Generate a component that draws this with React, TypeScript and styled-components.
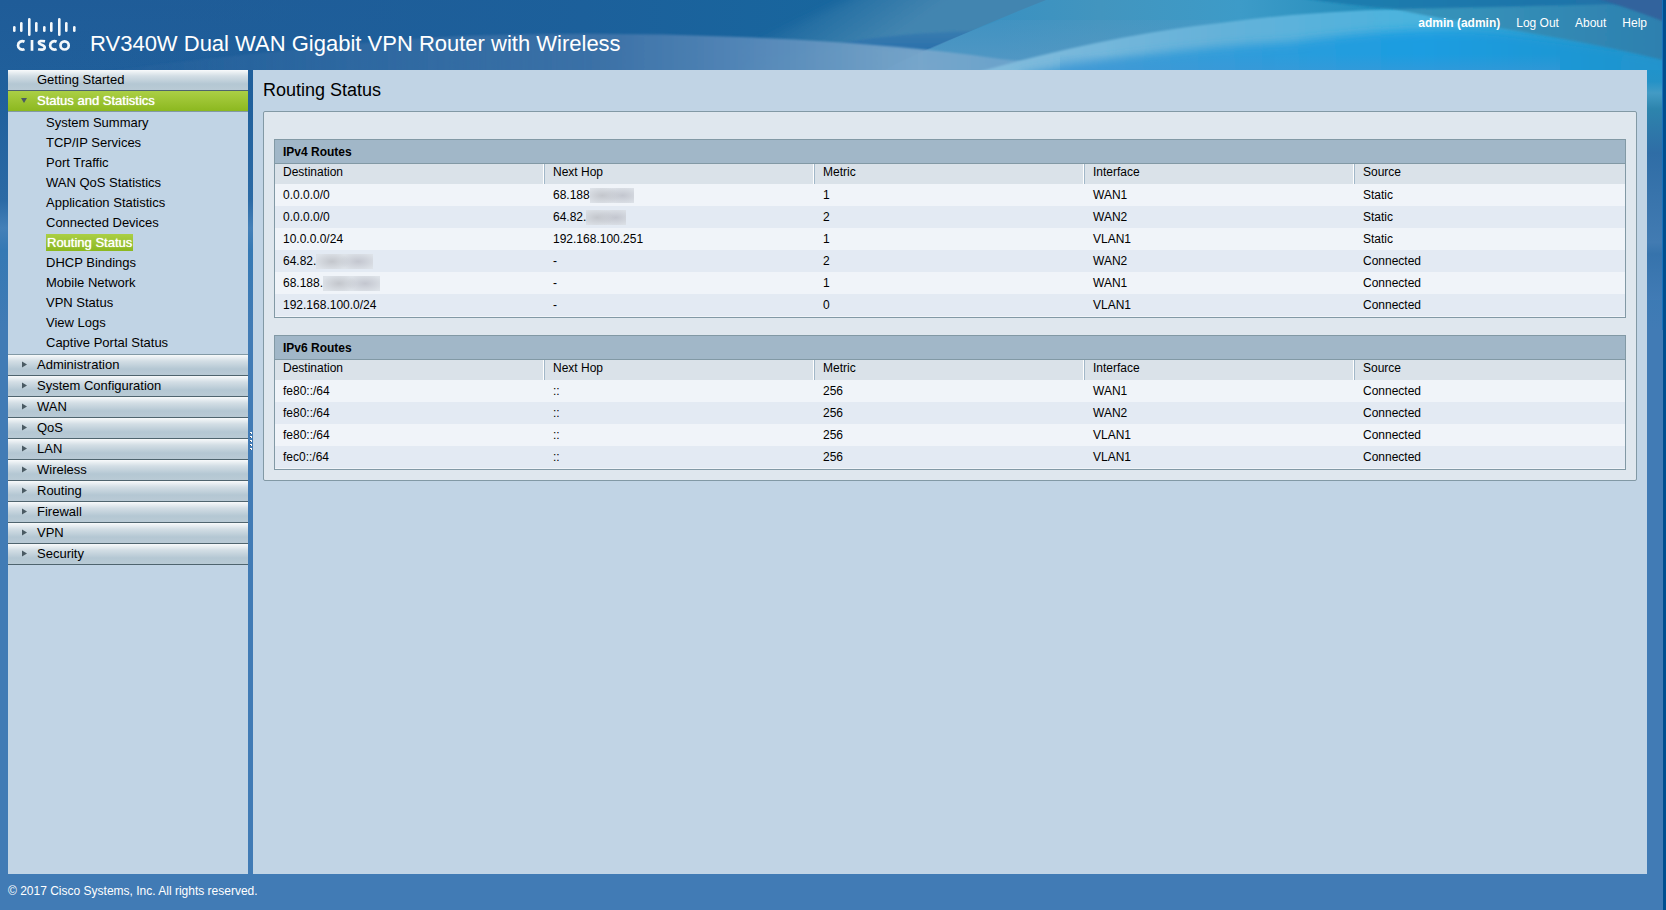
import React from "react";
import styled, { createGlobalStyle, css } from "styled-components";

const GlobalStyle = createGlobalStyle`
  * { box-sizing: border-box; }
  body {
    margin: 0;
    background: #417bb5;
    color: #000;
    font: 12px/16px "Liberation Sans", Arial, sans-serif;
  }
  ul { list-style: none; margin: 0; padding: 0; }
  a { color: inherit; text-decoration: none; }
  h1, h2 { margin: 0; font-weight: 400; }
`;

const Page = styled.div`
  position: relative;
  z-index: 0;
  display: flex;
  flex-direction: column;
  min-height: 100vh;
  padding: 0 19px 0 8px;
`;

const Backdrop = styled.div`
  position: absolute;
  inset: 0;
  z-index: -1;
  overflow: hidden;
  background: linear-gradient(#1f5c98 0, #20609c 100px, #2b6aa5 200px, #4480b8 228px, #3579b4 250px, #417bb5 330px);
  border-right: 3px solid #004f90;

  svg { position: absolute; top: 0; right: 0; }
`;

const Header = styled.header`
  display: flex;
  justify-content: space-between;
  align-items: flex-start;
  height: 70px;
  color: #fff;
`;

const Brand = styled.div`
  display: flex;
  gap: 13px;
  padding: 18px 0 0 4px;
`;

const ProductName = styled.h1`
  padding-top: 13px;
  font-size: 22px;
  line-height: 26px;
`;

const AccountLinks = styled.nav`
  display: flex;
  gap: 16px;
  padding-top: 15px;
`;

const Body = styled.div`
  display: flex;
  flex: 1;
`;

const Sidebar = styled.nav`
  width: 240px;
  background: #c1d4e5;
`;

const NavLink = styled.a<{ $open?: boolean }>`
  display: flex;
  align-items: center;
  height: 21px;
  border-bottom: 1px solid #4f646e;
  background: linear-gradient(#f8fafb 0, #d3dee5 30%, #b4c7d3 70%, #b9cad5 100%);
  font-size: 13px;
  line-height: 16px;

  ${(p) => p.$open && css`
    color: #fff;
    background: linear-gradient(#abcf45, #8cb81f);
    border-color: #8299a5;
    text-shadow: 0 0 1px #fff;
  `}
`;

const ArrowSlot = styled.span`
  display: flex;
  justify-content: center;
  width: 29px;
  padding: 0 0 1px 3px;

  svg { display: block; }
`;

const SubMenu = styled.ul`
  padding-bottom: 2px;
  border-bottom: 1px solid #8299a5;
`;

const SubItem = styled.li`
  display: flex;
  align-items: center;
  height: 20px;
  padding-left: 38px;
  font-size: 13px;
`;

const SubLink = styled.a<{ $current?: boolean }>`
  line-height: 17px;
  ${(p) => p.$current && css`
    padding: 0 1px;
    color: #fff;
    background: linear-gradient(#abcf45, #8cb81f);
    text-shadow: 0 0 1px #fff;
  `}
`;

const Splitter = styled.div`
  display: flex;
  flex-direction: column;
  justify-content: center;
  width: 5px;
  padding-bottom: 60px;
  svg { display: block; }
`;

const Main = styled.main`
  flex: 1;
  padding: 10px;
  background: #c1d4e5;
`;

const PageTitle = styled.h2`
  height: 31px;
  font-size: 18px;
  line-height: 20px;
`;

const Panel = styled.section`
  display: grid;
  gap: 17px;
  padding: 27px 10px 10px;
  border: 1px solid #8299a5;
  border-radius: 2px;
  background: #dfe7ee;
`;

const TableFrame = styled.div`
  padding-bottom: 1px;
  border: 1px solid #8299a5;
  background: #f0f4f9;
`;

const Table = styled.table`
  width: 100%;
  table-layout: fixed;
  border-collapse: separate;
  border-spacing: 0;

  caption {
    height: 24px;
    padding: 0 8px;
    border-bottom: 1px solid #8299a5;
    background: #a1b7c8;
    font-weight: 700;
    line-height: 24px;
    text-align: left;
  }
  th {
    height: 20px;
    padding: 0 8px 4px;
    background: #dae2e9;
    font-weight: 400;
    text-align: left;
  }
  th:not(:last-child) {
    border-right: 1px solid #a1b7c8;
    box-shadow: inset -1px 0 #fff;
  }
  td { height: 22px; padding: 0 8px; }
  tbody tr:nth-child(even) { background: #e3eaf3; }
`;

const Redacted = styled.span<{ $size: number }>`
  display: inline-block;
  width: ${(p) => p.$size}px;
  height: 15px;
  vertical-align: middle;
  background:
    radial-gradient(ellipse 18px 9px at 28% 50%, #c3c6cc, transparent),
    radial-gradient(ellipse 20px 9px at 74% 50%, #c3c6cf, transparent),
    #dde2e8;
`;

const Footer = styled.footer`
  height: 36px;
  padding-top: 9px;
  color: #fff;
`;

const logoBars = [
  [0, 8, 6], [7, 4, 10], [15, 0, 18], [22, 4, 10], [30, 8, 6], [37, 4, 10], [45, 0, 18], [52, 4, 10], [60, 8, 6],
];

const CiscoLogo = () => (
  <svg width="65" height="36" viewBox="0 0 65 36" role="img" aria-label="Cisco">
    {logoBars.map(([x, y, h]) => (
      <rect key={x} x={x + 1} y={y} width="2.6" height={h} rx="1.3" fill="#f4f8fb" />
    ))}
    <g fill="none" stroke="#f4f8fb" strokeWidth="2.7">
      <path d="M12.5 23.7A4.4 4.2 0 1 0 12.5 31.1" />
      <path d="M20 22V32.8" />
      <path d="M33 23.4C29.5 22.6 26.8 23 26.9 24.8C27.1 27.2 32.7 26.5 32.7 29.6C32.7 32 29 31.9 26.1 31.2" />
      <path d="M44.6 23.7A4.4 4.2 0 1 0 44.6 31.1" />
      <circle cx="52.6" cy="27.4" r="4.1" />
    </g>
  </svg>
);

const Waves = () => (
  <svg width="1663" height="330" viewBox="0 0 1663 330" aria-hidden="true">
    <defs>
      <linearGradient id="base">
        <stop offset="0" stopColor="#1f5c98" stopOpacity="0" />
        <stop offset=".35" stopColor="#1c609b" />
        <stop offset=".5" stopColor="#18669e" />
        <stop offset="1" stopColor="#1a67a0" />
      </linearGradient>
      <linearGradient id="hill" gradientUnits="userSpaceOnUse" x1="80" y1="0" x2="1200" y2="0">
        <stop offset="0" stopColor="#3f72a8" stopOpacity="0" />
        <stop offset=".46" stopColor="#3f73a8" />
        <stop offset=".6" stopColor="#5a8bbb" />
        <stop offset=".75" stopColor="#7ba8cc" />
        <stop offset=".88" stopColor="#66a3cc" />
        <stop offset="1" stopColor="#5a9fc9" stopOpacity="0" />
      </linearGradient>
      <linearGradient id="beam" gradientUnits="userSpaceOnUse" x1="800" y1="0" x2="850" y2="70">
        <stop offset="0" stopColor="#4385b0" stopOpacity="0" />
        <stop offset="1" stopColor="#4385b0" />
      </linearGradient>
      <linearGradient id="sliver" gradientUnits="userSpaceOnUse" x1="0" y1="28" x2="0" y2="50">
        <stop offset="0" stopColor="#3c7fb1" />
        <stop offset="1" stopColor="#2a70ab" />
      </linearGradient>
      <linearGradient id="sky" gradientUnits="userSpaceOnUse" x1="1000" y1="0" x2="1400" y2="0">
        <stop offset="0" stopColor="#3a91c1" />
        <stop offset=".25" stopColor="#4295bf" />
        <stop offset=".6" stopColor="#3d9bc8" />
        <stop offset="1" stopColor="#208bb9" />
      </linearGradient>
      <linearGradient id="haze" gradientUnits="userSpaceOnUse" x1="0" y1="0" x2="0" y2="70">
        <stop offset="0" stopColor="#5a98c4" stopOpacity="0" />
        <stop offset="1" stopColor="#5f9bc6" />
      </linearGradient>
      <linearGradient id="arc" gradientUnits="userSpaceOnUse" x1="980" y1="0" x2="1663" y2="0">
        <stop offset="0" stopColor="#84bcdc" />
        <stop offset=".35" stopColor="#65b2d9" />
        <stop offset=".65" stopColor="#4ab3de" />
        <stop offset=".8" stopColor="#2f9fd0" />
        <stop offset="1" stopColor="#2a8dbf" />
      </linearGradient>
      <linearGradient id="pool">
        <stop offset="0" stopColor="#479bd2" />
        <stop offset=".6" stopColor="#1b9de1" />
        <stop offset="1" stopColor="#2192ca" />
      </linearGradient>
      <linearGradient id="floor" x2="0" y2="1">
        <stop offset="0" stopColor="#3f97d6" stopOpacity="0" />
        <stop offset="1" stopColor="#3f97d6" />
      </linearGradient>
      <linearGradient id="teal">
        <stop offset="0" stopColor="#3896bd" />
        <stop offset=".4" stopColor="#3690b8" />
        <stop offset="1" stopColor="#2d80af" />
      </linearGradient>
      <linearGradient id="shade">
        <stop offset="0" stopColor="#1c7fb0" />
        <stop offset="1" stopColor="#2170a7" />
      </linearGradient>
      <linearGradient id="edge" x2="0" y2="1">
        <stop offset="0" stopColor="#2093cb" />
        <stop offset=".05" stopColor="#2492c7" />
        <stop offset=".1" stopColor="#439bc5" />
        <stop offset=".17" stopColor="#2d84ad" />
        <stop offset=".36" stopColor="#2f6da6" />
        <stop offset=".75" stopColor="#427bb2" />
        <stop offset=".8" stopColor="#3673ac" />
        <stop offset="1" stopColor="#417bb5" />
      </linearGradient>
      <filter id="soft" x="-10%" y="-40%" width="120%" height="180%">
        <feGaussianBlur stdDeviation="5" />
      </filter>
      <filter id="crisp" x="-5%" y="-20%" width="110%" height="140%">
        <feGaussianBlur stdDeviation="1" />
      </filter>
      <clipPath id="band"><rect width="1663" height="70" /></clipPath>
    </defs>
    <g clipPath="url(#band)">
      <rect width="1663" height="70" fill="url(#base)" />
      <path d="M740 50Q800 22 868 -10H1120V80H740Z" fill="url(#beam)" filter="url(#soft)" />
      <path d="M840 43Q900 32 1000 30L960 58Z" fill="url(#sliver)" filter="url(#crisp)" />
      <path d="M1046 0Q960 34 885 70H1663V0Z" fill="url(#sky)" />
      <path d="M1000 20Q920 50 885 70H1220V20Z" fill="url(#haze)" opacity=".7" />
      <path d="M80 74Q300 46 460 36Q600 31 740 37Q900 44 1000 59Q1080 66 1200 84H80Z" fill="url(#hill)" filter="url(#crisp)" opacity=".9" />
      <path d="M978 72Q1110 35 1220 23Q1300 12 1400 9L1663 2V80H978Z" fill="url(#arc)" filter="url(#crisp)" />
      <path d="M1020 74Q1160 48 1290 42Q1420 24 1500 32Q1600 44 1690 60V90H1020Z" fill="url(#pool)" filter="url(#soft)" />
      <rect x="1060" y="54" width="500" height="16" fill="url(#floor)" opacity=".5" />
      <path d="M1355 0Q1410 14 1500 28Q1600 44 1663 60V0Z" fill="url(#teal)" filter="url(#crisp)" />
      <path d="M1290 -4H1670V3L1400 9Q1340 5 1290 -4Z" fill="url(#shade)" filter="url(#crisp)" />
      <path d="M1590 -4H1670V24Q1640 12 1590 -4Z" fill="#31649d" filter="url(#crisp)" />
    </g>
    <rect x="1647" y="70" width="16" height="230" fill="url(#edge)" />
    <rect x="1662" width="1" height="330" fill="#1a70b8" />
  </svg>
);

const Arrow = ({ down }: { down?: boolean }) => (
  <svg width="7" height="7" viewBox="0 0 7 7" aria-hidden="true">
    <path d={down ? "M0 1H6L3 6Z" : "M1 0.5V6.5L6 3.5Z"} fill="#4a5a63" />
  </svg>
);

const Grip = () => (
  <svg width="5" height="20" viewBox="0 0 5 20" aria-hidden="true">
    {[0, 4, 8, 12, 16].map((y) => (
      <g key={y}>
        <rect x="2" y={y} width="2" height="2" fill="#fff" />
        <rect x="2" y={y + 1} width="1" height="1" fill="#36506c" />
      </g>
    ))}
  </svg>
);

const statusPages = [
  "System Summary", "TCP/IP Services", "Port Traffic", "WAN QoS Statistics", "Application Statistics",
  "Connected Devices", "Routing Status", "DHCP Bindings", "Mobile Network", "VPN Status", "View Logs",
  "Captive Portal Status",
];

const sections = [
  "Administration", "System Configuration", "WAN", "QoS", "LAN", "Wireless", "Routing", "Firewall", "VPN", "Security",
];

const columns = ["Destination", "Next Hop", "Metric", "Interface", "Source"];

const ipv4: React.ReactNode[][] = [
  ["0.0.0.0/0", <>68.188<Redacted $size={44} /></>, "1", "WAN1", "Static"],
  ["0.0.0.0/0", <>64.82.<Redacted $size={40} /></>, "2", "WAN2", "Static"],
  ["10.0.0.0/24", "192.168.100.251", "1", "VLAN1", "Static"],
  [<>64.82.<Redacted $size={57} /></>, "-", "2", "WAN2", "Connected"],
  [<>68.188.<Redacted $size={57} /></>, "-", "1", "WAN1", "Connected"],
  ["192.168.100.0/24", "-", "0", "VLAN1", "Connected"],
];

const ipv6: React.ReactNode[][] = [
  ["fe80::/64", "::", "256", "WAN1", "Connected"],
  ["fe80::/64", "::", "256", "WAN2", "Connected"],
  ["fe80::/64", "::", "256", "VLAN1", "Connected"],
  ["fec0::/64", "::", "256", "VLAN1", "Connected"],
];

const RouteTable = ({ title, rows }: { title: string; rows: React.ReactNode[][] }) => (
  <TableFrame>
    <Table>
      <caption>{title}</caption>
      <thead>
        <tr>{columns.map((c) => <th key={c} scope="col">{c}</th>)}</tr>
      </thead>
      <tbody>
        {rows.map((row, i) => (
          <tr key={i}>{row.map((cell, j) => <td key={j}>{cell}</td>)}</tr>
        ))}
      </tbody>
    </Table>
  </TableFrame>
);

export default function App() {
  return (
    <Page>
      <GlobalStyle />
      <Backdrop><Waves /></Backdrop>
      <Header>
        <Brand>
          <CiscoLogo />
          <ProductName>RV340W Dual WAN Gigabit VPN Router with Wireless</ProductName>
        </Brand>
        <AccountLinks aria-label="Account">
          <strong>admin (admin)</strong>
          <a href="#logout">Log Out</a>
          <a href="#about">About</a>
          <a href="#help">Help</a>
        </AccountLinks>
      </Header>
      <Body>
        <Sidebar aria-label="Main">
          <ul>
            <li><NavLink href="#start"><ArrowSlot />Getting Started</NavLink></li>
            <li>
              <NavLink href="#status" $open aria-expanded="true"><ArrowSlot><Arrow down /></ArrowSlot>Status and Statistics</NavLink>
              <SubMenu>
                {statusPages.map((name) => {
                  const current = name === "Routing Status";
                  return (
                    <SubItem key={name}>
                      <SubLink href="#page" $current={current} aria-current={current ? "page" : undefined}>{name}</SubLink>
                    </SubItem>
                  );
                })}
              </SubMenu>
            </li>
            {sections.map((name) => (
              <li key={name}><NavLink href="#section"><ArrowSlot><Arrow /></ArrowSlot>{name}</NavLink></li>
            ))}
          </ul>
        </Sidebar>
        <Splitter><Grip /></Splitter>
        <Main>
          <PageTitle>Routing Status</PageTitle>
          <Panel>
            <RouteTable title="IPv4 Routes" rows={ipv4} />
            <RouteTable title="IPv6 Routes" rows={ipv6} />
          </Panel>
        </Main>
      </Body>
      <Footer>© 2017 Cisco Systems, Inc. All rights reserved.</Footer>
    </Page>
  );
}
